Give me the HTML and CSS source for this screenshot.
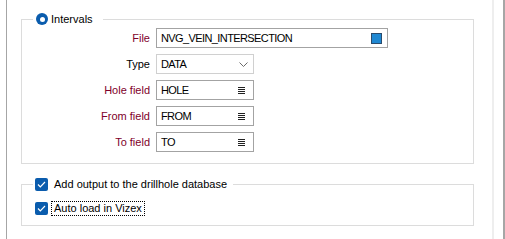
FILE: index.html
```html
<!DOCTYPE html>
<html>
<head>
<meta charset="utf-8">
<link rel="stylesheet" href="styles.css">
</head>
<body>
<div class="window">
  <div class="frame">
    <div class="group group-intervals">
      <div class="legend">
        <span class="radio"><span class="radio-dot"></span></span>
        <span class="legend-text">Intervals</span>
      </div>
      <div class="form">
        <label class="lbl req">File</label>
        <div class="field field-file">
          <span class="value">NVG_VEIN_INTERSECTION</span>
          <span class="swatch"></span>
        </div>

        <label class="lbl">Type</label>
        <div class="field field-combo">
          <span class="value">DATA</span>
          <svg class="chev" width="9" height="5" viewBox="0 0 9 5"><polyline points="0.5,0.5 4.5,4.5 8.5,0.5" fill="none" stroke="#6b6b6b" stroke-width="1"/></svg>
        </div>

        <label class="lbl req">Hole field</label>
        <div class="field field-list">
          <span class="value">HOLE</span>
          <svg class="list" width="7" height="7" viewBox="0 0 7 7"><rect x="0" y="0" width="7" height="1" fill="#222"/><rect x="0" y="2" width="7" height="1" fill="#222"/><rect x="0" y="4" width="7" height="1" fill="#222"/><rect x="0" y="6" width="7" height="1" fill="#222"/></svg>
        </div>

        <label class="lbl req">From field</label>
        <div class="field field-list">
          <span class="value">FROM</span>
          <svg class="list" width="7" height="7" viewBox="0 0 7 7"><rect x="0" y="0" width="7" height="1" fill="#222"/><rect x="0" y="2" width="7" height="1" fill="#222"/><rect x="0" y="4" width="7" height="1" fill="#222"/><rect x="0" y="6" width="7" height="1" fill="#222"/></svg>
        </div>

        <label class="lbl req">To field</label>
        <div class="field field-list">
          <span class="value">TO</span>
          <svg class="list" width="7" height="7" viewBox="0 0 7 7"><rect x="0" y="0" width="7" height="1" fill="#222"/><rect x="0" y="2" width="7" height="1" fill="#222"/><rect x="0" y="4" width="7" height="1" fill="#222"/><rect x="0" y="6" width="7" height="1" fill="#222"/></svg>
        </div>
      </div>
    </div>

    <div class="group group-output">
      <div class="legend">
        <span class="check"><svg width="9" height="7" viewBox="0 0 9 7"><polyline points="1,3.5 3.3,5.8 8,1" fill="none" stroke="#fff" stroke-width="1.2"/></svg></span>
        <span class="check-text">Add output to the drillhole database</span>
      </div>
      <div class="check-row">
        <span class="check"><svg width="9" height="7" viewBox="0 0 9 7"><polyline points="1,3.5 3.3,5.8 8,1" fill="none" stroke="#fff" stroke-width="1.2"/></svg></span>
        <span class="check-text focused">Auto load in Vizex</span>
      </div>
    </div>
  </div>
  <div class="scroll"></div>
</div>
</body>
</html>
```

FILE: styles.css
```css
html, body {
  margin: 0;
  padding: 0;
  background: #ffffff;
}

body {
  font-family: "Liberation Sans", Arial, sans-serif;
  font-size: 11px;
  color: #000000;
}

.window {
  display: flex;
  height: 239px;
  width: 505px;
  overflow: hidden;
}

.frame {
  margin-left: 6px;
  width: 485px;
  border-left: 1px solid #a6a6a6;
  padding-left: 14px;
  padding-top: 19px;
  box-sizing: border-box;
}

.scroll {
  width: 13px;
  border-left: 2px solid #eeeeee;
  border-right: 2px solid #a6a6a6;
  box-sizing: border-box;
  margin-left: 1px;
}

.group {
  width: 453px;
  box-sizing: border-box;
  border: 1px solid #dcdcdc;
}

.legend {
  display: flex;
  align-items: center;
  width: fit-content;
  height: 16px;
  margin-top: -9px;
  margin-left: 11px;
  padding: 0 10px 0 3px;
  background: #ffffff;
}

.radio {
  width: 12px;
  height: 12px;
  border-radius: 50%;
  background: #0a5cad;
  display: flex;
  align-items: center;
  justify-content: center;
  flex: none;
}

.radio-dot {
  width: 5px;
  height: 5px;
  border-radius: 50%;
  background: #ffffff;
}

.legend-text {
  margin-left: 3px;
  line-height: 16px;
}

.form {
  display: grid;
  grid-template-columns: 128px auto;
  column-gap: 6px;
  row-gap: 6px;
  margin-top: 1px;
  padding-bottom: 11px;
  justify-content: start;
}

.lbl {
  text-align: right;
  line-height: 20px;
  height: 20px;
}

.req {
  color: #80002a;
}

.field {
  height: 20px;
  box-sizing: border-box;
  border: 1px solid #a3a3a3;
  display: flex;
  align-items: center;
  padding-left: 4px;
}

.value {
  flex: 1;
  white-space: nowrap;
  letter-spacing: -0.6px;
}

.field-file {
  width: 232px;
  padding-right: 5px;
}

.swatch {
  width: 11px;
  height: 11px;
  box-sizing: border-box;
  background: #1f88d2;
  border: 1px solid #2a4b6d;
}

.field-combo {
  width: 98px;
  border-color: #d0d0d0;
  padding-right: 5px;
}

.field-list {
  width: 98px;
  padding-right: 8px;
}

.chev, .list {
  flex: none;
}

.group-output {
  margin-top: 20px;
}

.group-output .legend {
  padding: 0 3px 0 2px;
}

.check {
  width: 13px;
  height: 13px;
  border-radius: 2px;
  background: #0a5cad;
  display: flex;
  align-items: center;
  justify-content: center;
  flex: none;
}

.check-text {
  margin-left: 3px;
  padding: 0 2px;
  line-height: 13px;
  border: 1px dotted transparent;
}

.check-text.focused {
  border-color: #000000;
}

.check-row {
  display: flex;
  align-items: center;
  height: 16px;
  margin-top: 8px;
  margin-left: 13px;
  margin-bottom: 9px;
}
```
